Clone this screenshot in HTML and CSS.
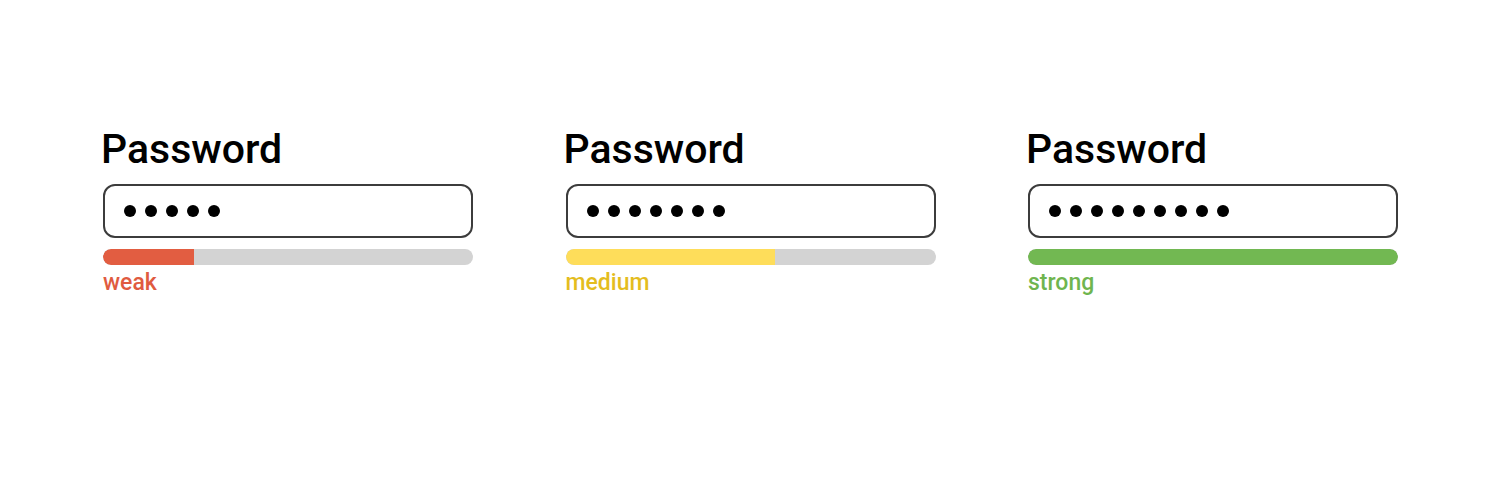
FILE: index.html
```html
<!DOCTYPE html>
<html lang="en">
<head>
    <meta charset="UTF-8">
    <title>Password strength</title>
    <link rel="stylesheet" href="styles.css">
</head>
<body>
    <main class="fields">
        <section class="field">
            <h2 class="field-title">Password</h2>
            <div class="input-box">
                <span class="dot"></span><span class="dot"></span><span class="dot"></span><span class="dot"></span><span class="dot"></span>
            </div>
            <div class="meter"><div class="meter-fill weak" style="width: 24.6%"></div></div>
            <p class="meter-label weak">weak</p>
        </section>

        <section class="field">
            <h2 class="field-title">Password</h2>
            <div class="input-box">
                <span class="dot"></span><span class="dot"></span><span class="dot"></span><span class="dot"></span><span class="dot"></span><span class="dot"></span><span class="dot"></span>
            </div>
            <div class="meter"><div class="meter-fill medium" style="width: 56.5%"></div></div>
            <p class="meter-label medium">medium</p>
        </section>

        <section class="field">
            <h2 class="field-title">Password</h2>
            <div class="input-box">
                <span class="dot"></span><span class="dot"></span><span class="dot"></span><span class="dot"></span><span class="dot"></span><span class="dot"></span><span class="dot"></span><span class="dot"></span><span class="dot"></span>
            </div>
            <div class="meter"><div class="meter-fill strong" style="width: 100%"></div></div>
            <p class="meter-label strong">strong</p>
        </section>
    </main>
</body>
</html>
```

FILE: styles.css
```css
/* General */
body {
    margin: 0;
    font-family: Roboto, 'Liberation Sans', sans-serif;
    background-color: #ffffff;
    color: #000000;
}

.fields {
    display: flex;
    justify-content: space-between;
    padding: 125px 102px 0 103px;
}

.field {
    width: 370px;
}

.field-title {
    margin: 0 0 11px -2px;
    font-size: 41px;
    font-weight: 500;
    line-height: 48px;
}

/* Fake password input */
.input-box {
    box-sizing: border-box;
    height: 54px;
    border: 2px solid #3c3c3c;
    border-radius: 12px;
    padding-left: 19px;
    display: flex;
    align-items: center;
    gap: 9px;
}

.dot {
    width: 12px;
    height: 12px;
    border-radius: 50%;
    background-color: #000000;
}

/* Strength meter */
.meter {
    margin-top: 11px;
    height: 16px;
    border-radius: 8px;
    background-color: #d3d3d3;
    overflow: hidden;
}

.meter-fill {
    height: 100%;
    border-radius: 8px 0 0 8px;
}

.meter-fill.weak { background-color: #e25d41; }
.meter-fill.medium { background-color: #fedd5a; }
.meter-fill.strong { background-color: #72b852; border-radius: 8px; }

.meter-label {
    margin: 4px 0 0;
    font-size: 23px;
    font-weight: 500;
    line-height: 27px;
}

.meter-label.weak { color: #e05b3f; }
.meter-label.medium { color: #e4bd1e; }
.meter-label.strong { color: #6fb54f; }
```
